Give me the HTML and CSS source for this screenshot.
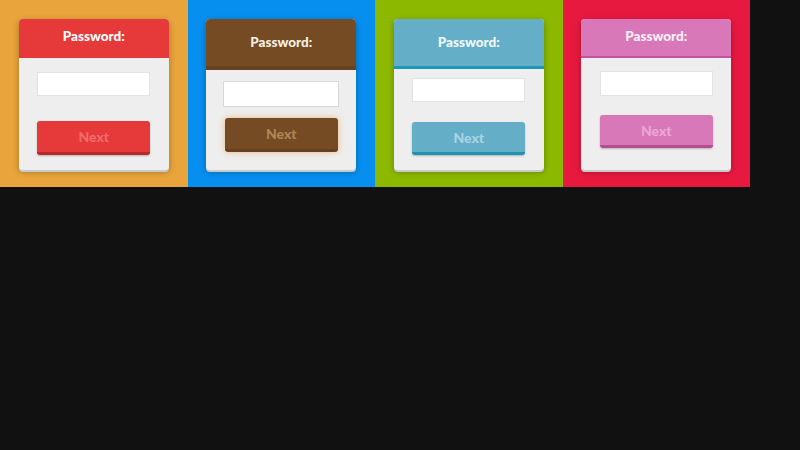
FILE: index.html
```html
<!DOCTYPE html>
<html lang="en">
<head>
<meta charset="utf-8">
<title>Password cards</title>
<link rel="stylesheet" href="styles.css">
</head>
<body>
<div class="row">
  <section class="panel panel-orange">
    <div class="card card-red">
      <div class="card-head">Password:</div>
      <div class="card-body">
        <input class="field" type="password" aria-label="Password">
        <button class="btn" type="button">Next</button>
      </div>
    </div>
  </section>
  <section class="panel panel-blue">
    <div class="card card-brown">
      <div class="card-head">Password:</div>
      <div class="card-body">
        <input class="field" type="password" aria-label="Password">
        <button class="btn" type="button">Next</button>
      </div>
    </div>
  </section>
  <section class="panel panel-green">
    <div class="card card-teal">
      <div class="card-head">Password:</div>
      <div class="card-body">
        <input class="field" type="password" aria-label="Password">
        <button class="btn" type="button">Next</button>
      </div>
    </div>
  </section>
  <section class="panel panel-crimson">
    <div class="card card-pink">
      <div class="card-head">Password:</div>
      <div class="card-body">
        <input class="field" type="password" aria-label="Password">
        <button class="btn" type="button">Next</button>
      </div>
    </div>
  </section>
</div>
</body>
</html>
```
FILE: styles.css
```css
html, body {
  margin: 0;
  padding: 0;
  background: #111111;
  font-family: Lato, "Open Sans", "Liberation Sans", sans-serif;
}

.row {
  display: flex;
  width: 750px;
}

.panel {
  width: 187.5px;
  height: 187px;
  flex: none;
  display: flex;
  justify-content: center;
  align-items: flex-start;
  padding-top: 19px;
  box-sizing: border-box;
}

.panel-orange { background: #e9a43b; }
.panel-blue { background: #078ff0; }
.panel-green { background: #8db800; }
.panel-crimson { background: #e8193f; }

.card {
  width: 150px;
  height: 151px;
  background: #eeeeee;
  border-radius: 4px;
  overflow: hidden;
  box-shadow: 0 2px 0 #c9c9c9, 0 2px 6px rgba(0, 0, 0, 0.3);
  display: flex;
  flex-direction: column;
}

.card-head {
  color: #ffffff;
  font-weight: 900;
  font-size: 13.5px;
  text-align: center;
  box-sizing: border-box;
}

.card-body {
  display: flex;
  flex-direction: column;
  align-items: center;
}

.field {
  display: block;
  width: 113px;
  height: 24px;
  margin: 0;
  padding: 0;
  box-sizing: border-box;
  background: #ffffff;
  border: 1px solid #e2e2e2;
  border-radius: 0;
  outline: none;
}

.btn {
  display: block;
  width: 113px;
  margin: 0;
  padding: 0;
  box-sizing: border-box;
  font-family: inherit;
  font-weight: 900;
  font-size: 14px;
  border: none;
  border-radius: 3px;
  cursor: pointer;
  text-align: center;
}

/* red */
.card-red .card-head {
  background: #e5393a;
  height: 39px;
  line-height: 35px;
}
.card-red .card-body { padding-top: 14px; gap: 25px; }
.card-red .btn {
  height: 34px;
  background: #e5393a;
  border-bottom: 3px solid #b92a2c;
  color: #ee6d6c;
  box-shadow: 0 1px 2px rgba(0, 0, 0, 0.25);
}

/* brown */
.card-brown .card-head {
  background: #744b23;
  height: 51px;
  line-height: 47px;
  border-bottom: 4px solid #684220;
  color: #f7f0e6;
}
.card-brown .card-body { padding-top: 11px; gap: 11px; }
.card-brown .field {
  width: 116px;
  height: 26px;
  border: 1px solid #d8d8d8;
}
.card-brown .btn {
  height: 34px;
  background: #744b23;
  border-bottom: 3px solid #664120;
  color: #ad8656;
  box-shadow: 0 0 6px rgba(235, 150, 60, 0.6);
}

/* teal */
.card-teal .card-head {
  background: #64aec8;
  height: 50px;
  line-height: 47px;
  border-bottom: 3px solid #1d97b6;
  color: #f1f9fb;
}
.card-teal .card-body { padding-top: 9px; gap: 20px; }
.card-teal .btn {
  height: 33px;
  background: #64aec8;
  border-bottom: 3px solid #1f93b3;
  color: #a7d4e4;
  box-shadow: 0 1px 2px rgba(0, 0, 0, 0.25);
}

/* pink */
.card-pink .card-head {
  background: #d878b8;
  height: 39px;
  line-height: 34px;
  border-bottom: 2px solid #c2529c;
  color: #fbf0f7;
}
.card-pink .card-body { padding-top: 13px; gap: 19px; }
.card-pink .field { height: 25px; }
.card-pink .btn {
  height: 33px;
  background: #d878b8;
  border-bottom: 3px solid #b54d93;
  color: #eca6d6;
  box-shadow: 0 1px 2px rgba(0, 0, 0, 0.25);
}
```
